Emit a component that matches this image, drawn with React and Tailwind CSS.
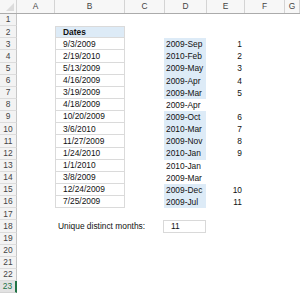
import React from "react";

const COLS = [
  { k: "A", w: "w-[38px]" },
  { k: "B", w: "w-[70px]" },
  { k: "C", w: "w-[40px]" },
  { k: "D", w: "w-[42px]" },
  { k: "E", w: "w-[38px]" },
  { k: "F", w: "w-[40px]" },
  { k: "G", w: "w-[15px]" },
];

const dates = [
  "9/3/2009", "2/19/2010", "5/13/2009", "4/16/2009", "3/19/2009", "4/18/2009",
  "10/20/2009", "3/6/2010", "11/27/2009", "1/24/2010", "1/1/2010", "3/8/2009",
  "12/24/2009", "7/25/2009",
];
const months = [
  ["2009-Sep", true, "1"], ["2010-Feb", true, "2"], ["2009-May", true, "3"],
  ["2009-Apr", true, "4"], ["2009-Mar", true, "5"], ["2009-Apr", false, ""],
  ["2009-Oct", true, "6"], ["2010-Mar", true, "7"], ["2009-Nov", true, "8"],
  ["2010-Jan", true, "9"], ["2010-Jan", false, ""], ["2009-Mar", false, ""],
  ["2009-Dec", true, "10"], ["2009-Jul", true, "11"],
];

function Row({ n, selected, children }) {
  return (
    <div className="flex h-[12.15px]">
      <div
        className={
          selected
            ? "w-[17px] shrink-0 flex items-center justify-center bg-[#e2e2e2] text-[#217346] border-r-2 border-[#217346] border-b border-b-[#d4d4d4]"
            : "w-[17px] shrink-0 flex items-center justify-center bg-[#f3f3f3] text-[#444] border-r border-[#c6c6c6] border-b border-b-[#dcdcdc]"
        }
      >
        {n}
      </div>
      {children}
    </div>
  );
}

export default function App() {
  const rows = [];
  for (let n = 1; n <= 23; n++) {
    let b = null, d = null, e = null, bExtra = "", dExtra = "", bText = null;
    if (n === 2) {
      b = <span className="font-bold">Dates</span>;
      bExtra = "bg-[#ddebf7] border-x border-t border-b border-[#dadada]";
    } else if (n >= 3 && n <= 16) {
      b = dates[n - 3];
      bExtra = "border-x border-b border-[#dadada]";
      const m = months[n - 3];
      d = m[0];
      dExtra = m[1] ? "bg-[#ddebf7]" : "";
      e = m[2];
    }
    if (n === 18) bText = "Unique distinct months:";
    rows.push(
      <Row key={n} n={n} selected={n === 23}>
        <div className="w-[38px] shrink-0" />
        <div className={"w-[70px] shrink-0 flex items-center whitespace-nowrap " + (bText ? "pl-[3px] overflow-visible " : "pl-[7px] ") + bExtra}>
          {bText || b}
        </div>
        <div className="w-[40px] shrink-0 -ml-px" />
        <div className={"w-[42px] shrink-0 flex items-center pl-[2px] whitespace-nowrap " + dExtra}>
          {n === 18 ? (
            <div className="w-[43px] h-[12.15px] -ml-[3px] border border-[#d9d9d9] flex items-center pl-[7px]">11</div>
          ) : d}
        </div>
        <div className="w-[38px] shrink-0 flex items-center justify-end pr-[2px]">{e}</div>
        <div className="w-[40px] shrink-0" />
        <div className="w-[15px] shrink-0" />
      </Row>
    );
  }
  return (
    <div className="w-[300px] h-[293px] overflow-hidden bg-white text-[8.4px] leading-none text-[#111]" style={{ fontFamily: '"Liberation Sans", Arial, sans-serif' }}>
      <div className="flex h-[14px] bg-[#f7f7f7] border-b border-[#ababab]">
        <div className="w-[17px] shrink-0 relative border-r border-[#d4d4d4]">
          <div className="absolute right-[2px] bottom-[2px] w-0 h-0 border-l-[8px] border-l-transparent border-b-[8px] border-b-[#dcdcdc]" />
        </div>
        {COLS.map((c) => (
          <div key={c.k} className={c.w + " shrink-0 flex items-center justify-center text-[#444] border-r border-[#d4d4d4]"}>
            {c.k}
          </div>
        ))}
      </div>
      {rows}
    </div>
  );
}
